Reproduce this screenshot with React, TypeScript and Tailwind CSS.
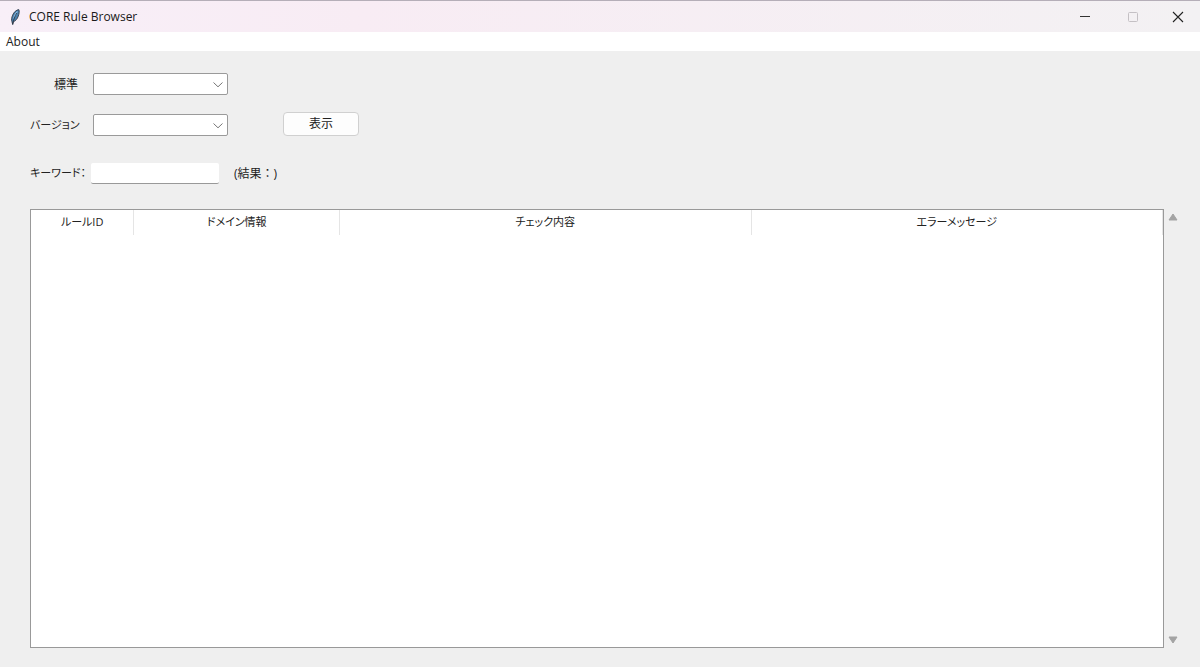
import React from 'react';

const columns = [
  { label: 'ルールID', width: 'w-1/11' },
  { label: 'ドメイン情報', width: 'w-2/11' },
  { label: 'チェック内容', width: 'w-4/11' },
  { label: 'エラーメッセージ', width: 'w-4/11' }
];

const FeatherIcon: React.FC = () => (
  <svg className="h-4 w-3" viewBox="0 0 12 16" fill="none" aria-hidden="true">
    <path d="M9.800.6C7.200 1 4.800 3.200 3.600 6.200 2.600 8.600 2.300 10.800 2.900 12.500l.8 3 .6-2.700c2.300-.9 4.100-3 5-5.700.8-2.400 1.300-5 .5-6.500Z" fill="#4a7fae" stroke="#333b49" strokeWidth=".9" />
    <path d="M8.800 1.800C6.500 3.200 4.800 6.200 4 10.200 5.900 8.200 8.200 5.400 8.800 1.800Z" fill="#8fbde2" />
    <path d="M7.800 4C6 7 4.500 10.500 3.700 15.400" stroke="#26303f" strokeWidth=".8" />
  </svg>
);

interface ComboBoxProps {
  id: string;
  label: string;
  labelSize: string;
}

const ComboBox: React.FC<ComboBoxProps> = ({ id, label, labelSize }) => (
  <>
    <label htmlFor={id} className={`w-12 self-center pt-0.5 text-right whitespace-nowrap ${labelSize}`}>
      {label}
    </label>
    <div className="relative ml-[15px]">
      <select
        id={id}
        className="block h-[22px] w-[135px] appearance-none rounded-xs border border-[#9a9a9a] bg-white px-1 outline-none"
      >
        <option value=""></option>
      </select>
      <svg className="pointer-events-none absolute top-2 right-1 h-2 w-3" viewBox="0 0 12 8" fill="none" aria-hidden="true">
        <path d="m1.500 1.500 4.500 4.300 4.500-4.300" stroke="#777" />
      </svg>
    </div>
  </>
);

const TitleBar: React.FC = () => (
  <header className="flex h-8 items-center border-t border-[#b5aeb8] bg-gradient-to-r from-[#f8eff8] via-[#f8ecf4] via-30% to-[#f3f1f3] pl-[9px]">
    <FeatherIcon />
    <h1 className="ml-2 flex-1 text-[#1a1a1a]">CORE Rule Browser</h1>
    <div className="flex h-full">
      <button type="button" aria-label="Minimize" className="flex w-12 items-center justify-center">
        <svg className="h-3 w-3" viewBox="0 0 12 12" fill="none">
          <path d="M1 5.500h10" stroke="#333" />
        </svg>
      </button>
      <button type="button" aria-label="Maximize" disabled className="flex w-12 items-center justify-center">
        <svg className="h-3 w-3" viewBox="0 0 12 12" fill="none">
          <rect x="1.500" y="1.500" width="9" height="9" rx="1" stroke="#c4c0c4" />
        </svg>
      </button>
      <button type="button" aria-label="Close" className="flex w-[42px] items-center justify-center mr-px">
        <svg className="h-3 w-3" viewBox="0 0 12 12" fill="none">
          <path d="m1 1 10 10M11 1 1 11" stroke="#222" strokeWidth="1.100" />
        </svg>
      </button>
    </div>
  </header>
);

const App: React.FC = () => {
  return (
    <div className="flex min-h-screen flex-col bg-[#efefef] font-['Open_Sans','Noto_Sans_CJK_JP',sans-serif] text-xs text-[#222]">
      <TitleBar />

      <nav className="flex h-[19px] items-center bg-white px-[6px]">
        <button type="button">About</button>
      </nav>

      <main className="flex flex-1 flex-col pt-[22px] pr-[18px] pb-[19px] pl-[30px] [font-feature-settings:'palt']">
        {/* Search form */}
        <form onSubmit={(e) => e.preventDefault()}>
          <div className="flex items-center">
            <ComboBox id="standard" label="標準" labelSize="text-xs" />
          </div>
          <div className="mt-[17px] flex items-end">
            <ComboBox id="version" label="バージョン" labelSize="text-[11px]" />
            <button
              type="submit"
              className="ml-[55px] h-6 w-[76px] rounded border border-[#d0d0d0] bg-[#fdfdfd]"
            >
              表示
            </button>
          </div>
          <div className="mt-[27px] flex items-center">
            <label htmlFor="keyword" className="w-14 text-right text-[11px] whitespace-nowrap">
              キーワード：
            </label>
            <input
              id="keyword"
              type="text"
              className="ml-[5px] h-[21px] w-32 rounded-xs border-b border-[#999] bg-white px-1 outline-none"
            />
            <output htmlFor="keyword" className="ml-[15px] [font-feature-settings:normal]">
              (結果：)
            </output>
          </div>
        </form>

        {/* Rule list */}
        <div className="mt-[25px] flex flex-1">
          <div className="flex-1 border border-[#999] bg-white">
            <table className="w-full table-fixed border-collapse text-[11px]">
              <thead>
                <tr className="h-[25px]">
                  {columns.map((column) => (
                    <th
                      key={column.label}
                      scope="col"
                      className={`${column.width} border-r border-[#e5e5e5] p-0 text-center font-normal`}
                    >
                      {column.label}
                    </th>
                  ))}
                </tr>
              </thead>
              <tbody></tbody>
            </table>
          </div>
          <div className="flex w-[18px] flex-col items-center justify-between py-1">
            <button type="button" aria-label="Scroll up">
              <svg className="h-2 w-3" viewBox="0 0 12 8">
                <path d="M6 1 10 7H2Z" fill="#a3a3a3" stroke="#a3a3a3" strokeLinejoin="round" />
              </svg>
            </button>
            <button type="button" aria-label="Scroll down">
              <svg className="h-2 w-3" viewBox="0 0 12 8">
                <path d="M6 7 2 1h8Z" fill="#a3a3a3" stroke="#a3a3a3" strokeLinejoin="round" />
              </svg>
            </button>
          </div>
        </div>
      </main>
    </div>
  );
};

export default App;
